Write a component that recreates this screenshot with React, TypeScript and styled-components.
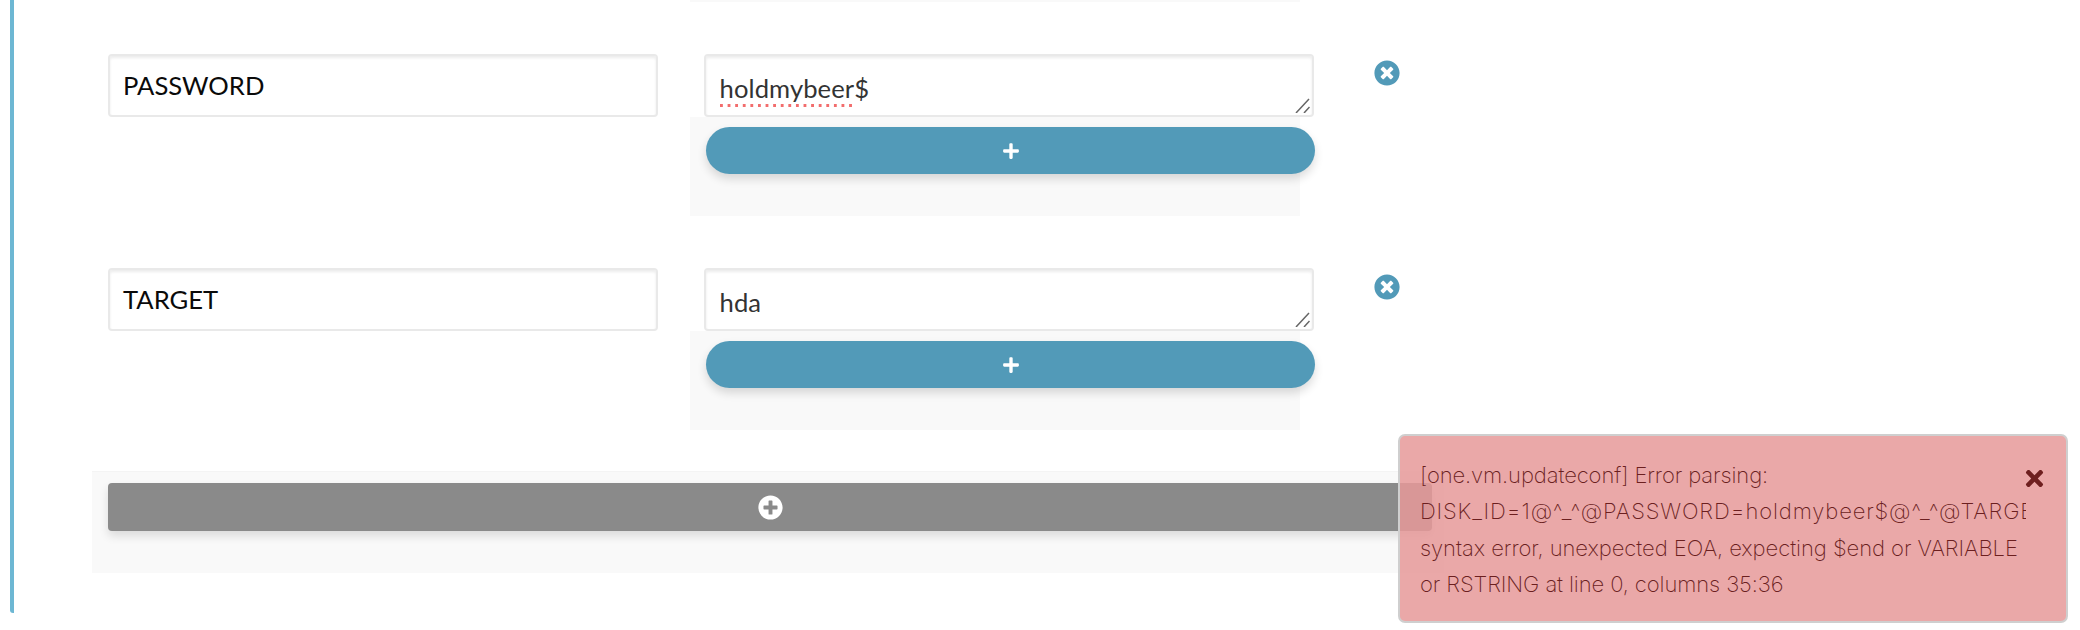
import React from "react";
import styled, { createGlobalStyle } from "styled-components";
import { FaTimesCircle, FaPlus, FaPlusCircle, FaTimes } from "react-icons/fa";

const Global = createGlobalStyle`
  html, body { margin: 0; padding: 0; background: #fff; }
  body { font-family: "Lato", "Liberation Sans", sans-serif; overflow: hidden; }
  * { box-sizing: border-box; }
`;

const Page = styled.div`
  position: relative;
  width: 2080px;
  height: 630px;
  padding-left: 10px;
  overflow: hidden;
`;

const Panel = styled.section`
  width: 1440px;
  height: 613px;
  border-left: 4px solid #6db7d3;
  border-bottom-left-radius: 3px;
`;

const TopStrip = styled.div`
  width: 610px;
  height: 2px;
  margin-left: 676px;
  margin-bottom: 52px;
  background: #f9f9f9;
`;

const Row = styled.div`
  display: grid;
  grid-template-columns: 550px 610px 26px;
  column-gap: 32px;
  padding-left: 94px;
  margin-bottom: 52px;
  align-items: start;
`;

const KeyField = styled.div`
  height: 63px;
  border: 2px solid #e9e9e9;
  border-radius: 4px;
  box-shadow: inset 0 2px 3px rgba(0, 0, 0, 0.08);
  padding: 13px 13px;
  font-size: 25.6px;
  line-height: 32px;
  color: #0a0a0a;
`;

const ValueColumn = styled.div`
  width: 610px;
`;

const ValueField = styled.div`
  position: relative;
  z-index: 1;
  width: 610px;
  height: 63px;
  margin-left: 14px;
  border: 2px solid #e9e9e9;
  border-radius: 4px;
  background: #fff;
  box-shadow: inset 0 2px 3px rgba(0, 0, 0, 0.08);
  padding: 17px 13.5px;
  font-size: 25.6px;
  letter-spacing: 0.1px;
  line-height: 30px;
  color: #333;
`;

const Misspelled = styled.span`
  padding-bottom: 4px;
  background: radial-gradient(circle at 1.5px 1.5px, #f26d6d 1.5px, transparent 1.7px) left bottom / 7.6px 3px repeat-x;
`;

const Grip = styled.svg`
  position: absolute;
  right: 2px;
  bottom: 2px;
  width: 16px;
  height: 16px;
`;

const ValueFooter = styled.div`
  height: 99px;
  padding: 10px 0 0 16px;
  background: #f9f9f9;
`;

const PillButton = styled.div`
  display: flex;
  align-items: center;
  justify-content: center;
  width: 609px;
  height: 47px;
  border-radius: 24px;
  background: #529ab8;
  color: #fff;
  font-size: 18px;
  box-shadow: 0 5px 10px rgba(0, 0, 0, 0.14);
`;

const RemoveIcon = styled.div`
  margin-top: 6px;
  margin-left: 42px;
  color: #529ab8;
  font-size: 26px;
  line-height: 0;
`;

const AddPanel = styled.div`
  width: 1352px;
  height: 102px;
  margin: -11px 0 0 78px;
  padding: 11px 12px 0 16px;
  background: #f9f9f9;
  border-top: 1px solid #f4f4f4;
`;

const AddButton = styled.div`
  display: flex;
  align-items: center;
  justify-content: center;
  height: 48px;
  border-radius: 4px;
  background: #8a8a8a;
  color: #fff;
  font-size: 25px;
  box-shadow: 0 5px 10px rgba(0, 0, 0, 0.12);
`;

const Toast = styled.aside`
  position: absolute;
  left: 1398px;
  top: 434px;
  width: 670px;
  height: 189px;
  border: 2px solid #cfcfcf;
  border-radius: 7px;
  background: rgba(230, 153, 153, 0.85);
  padding: 21px 0 0 20px;
  color: #6b1f1f;
  font-family: "Inter", "Liberation Sans", sans-serif;
  font-size: 22px;
  font-weight: 200;
  line-height: 36.3px;
`;

const ToastText = styled.div<{ $spread: number }>`
  width: 606px;
  overflow: hidden;
  white-space: nowrap;
  letter-spacing: ${(p) => p.$spread}px;
`;

const ToastClose = styled.div`
  position: absolute;
  top: 30px;
  right: 19px;
  color: #6e1f1f;
  font-size: 25px;
  line-height: 0;
`;

const rows = [
  { key: "PASSWORD", value: "holdmybeer", tail: "$", misspelled: true },
  { key: "TARGET", value: "hda", tail: "", misspelled: false },
];

const messages = [
  { text: "[one.vm.updateconf] Error parsing:", spread: -0.1 },
  { text: "DISK_ID=1@^_^@PASSWORD=holdmybeer$@^_^@TARGET=hda", spread: 0.85 },
  { text: "syntax error, unexpected EOA, expecting $end or VARIABLE", spread: -0.05 },
  { text: "or RSTRING at line 0, columns 35:36", spread: -0.1 },
];

export default function App() {
  return (
    <Page>
      <Global />
      <Panel>
        <TopStrip />
        {rows.map((row) => (
          <Row key={row.key}>
            <KeyField>{row.key}</KeyField>
            <ValueColumn>
              <ValueField>
                {row.misspelled ? <Misspelled>{row.value}</Misspelled> : row.value}
                {row.tail}
                <Grip viewBox="0 0 16 16">
                  <path d="M2 16 L15 2 M10 16 L15.5 10" stroke="#666" strokeWidth="1.5" fill="none" />
                </Grip>
              </ValueField>
              <ValueFooter>
                <PillButton>
                  <FaPlus />
                </PillButton>
              </ValueFooter>
            </ValueColumn>
            <RemoveIcon>
              <FaTimesCircle />
            </RemoveIcon>
          </Row>
        ))}
        <AddPanel>
          <AddButton>
            <FaPlusCircle />
          </AddButton>
        </AddPanel>
      </Panel>
      <Toast>
        {messages.map((line) => (
          <ToastText key={line.text} $spread={line.spread}>
            {line.text}
          </ToastText>
        ))}
        <ToastClose>
          <FaTimes />
        </ToastClose>
      </Toast>
    </Page>
  );
}
